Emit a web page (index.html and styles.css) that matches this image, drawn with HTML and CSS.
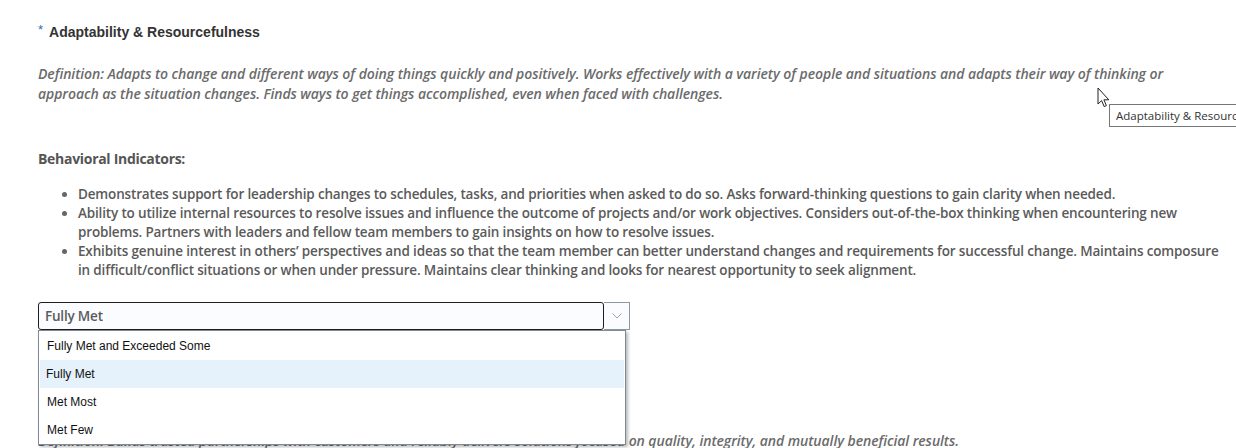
FILE: index.html
```html
<!DOCTYPE html>
<html lang="en">
<head>
<meta charset="utf-8">
<title>Adaptability & Resourcefulness</title>
<link rel="stylesheet" href="styles.css">
</head>
<body>
<main class="page">
  <section class="competency">
    <h2 class="title"><span class="req">*</span>Adaptability &amp; Resourcefulness</h2>
    <p class="definition">Definition: Adapts to change and different ways of doing things quickly and positively. Works effectively with a variety of people and situations and adapts their way of thinking or approach as the situation changes. Finds ways to get things accomplished, even when faced with challenges.</p>
    <h3 class="indicators-title">Behavioral Indicators:</h3>
    <ul class="indicators">
      <li>Demonstrates support for leadership changes to schedules, tasks, and priorities when asked to do so. Asks forward-thinking questions to gain clarity when needed.</li>
      <li>Ability to utilize internal resources to resolve issues and influence the outcome of projects and/or work objectives. Considers out-of-the-box thinking when encountering new problems. Partners with leaders and fellow team members to gain insights on how to resolve issues.</li>
      <li>Exhibits genuine interest in others’ perspectives and ideas so that the team member can better understand changes and requirements for successful change. Maintains composure in difficult/conflict situations or when under pressure. Maintains clear thinking and looks for nearest opportunity to seek alignment.</li>
    </ul>
    <div class="select-wrap">
      <div class="select">
        <div class="select-value">Fully Met</div>
        <div class="select-btn">
          <svg width="10" height="6" viewBox="0 0 10 6"><path d="M0.5 0.5 L5 5 L9.5 0.5" fill="none" stroke="#a0a6ad" stroke-width="1"/></svg>
        </div>
      </div>
      <ul class="options">
        <li class="option">Fully Met and Exceeded Some</li>
        <li class="option active">Fully Met</li>
        <li class="option">Met Most</li>
        <li class="option">Met Few</li>
      </ul>
    </div>
  </section>
  <section class="competency next">
    <h2 class="title"><span class="req">*</span>Customer Focus</h2>
    <p class="definition">Definition: Builds trusted partnerships with customers and reliably delivers solutions focused on quality, integrity, and mutually beneficial results.</p>
  </section>
</main>
<div class="tooltip">Adaptability &amp; Resourcefulness</div>
<svg class="cursor" width="14" height="22" viewBox="0 0 14 22"><path d="M1 1 L1 17 L4.6 13.6 L7.2 19.6 L9.4 18.6 L6.9 12.8 L11.8 12.8 Z" fill="#fff" stroke="#222" stroke-width="1" stroke-linejoin="miter"/></svg>
</body>
</html>
```

FILE: styles.css
```css
html, body {
  margin: 0;
  padding: 0;
  background: #fff;
  overflow: hidden;
}
body {
  width: 1236px;
  height: 448px;
  position: relative;
  font-family: "Open Sans", "Noto Sans", sans-serif;
}
.page {
  padding: 22px 10px 0 38px;
}
.title {
  margin: 0;
  font-family: "Liberation Sans", Arial, sans-serif;
  font-size: 14px;
  font-weight: bold;
  color: #333;
  line-height: 20px;
}
.req {
  color: #2a6ebb;
  font-weight: normal;
  font-size: 13px;
  margin-right: 6px;
  position: relative;
  top: -3px;
}
.definition {
  margin: 21px 16px 0 0;
  font-style: italic;
  font-weight: 600;
  font-size: 14px;
  letter-spacing: -0.07px;
  line-height: 20px;
  color: #6b6b6b;
}
.indicators-title {
  margin: 45px 0 0 0;
  font-size: 14px;
  font-weight: 700;
  letter-spacing: -0.3px;
  color: #555;
  line-height: 20px;
}
.indicators {
  margin: 16px 0 0 0;
  padding-left: 40px;
  font-size: 13.5px;
  font-weight: 600;
  letter-spacing: -0.16px;
  color: #5a5a5a;
  line-height: 19px;
}
.indicators li::marker {
  color: #666;
}
.select-wrap {
  position: relative;
  margin-top: 22px;
  width: 592px;
}
.select {
  display: flex;
  height: 28px;
}
.select-value {
  flex: 1;
  box-sizing: border-box;
  border: 1.5px solid #1e1e1e;
  border-radius: 3px;
  background: #fafcff;
  padding: 0 6px;
  font-size: 13.5px;
  font-weight: 600;
  letter-spacing: -0.2px;
  color: #5a5a5a;
  line-height: 27px;
}
.select-btn {
  width: 26px;
  box-sizing: border-box;
  border: 1px solid #8c98a4;
  border-left: none;
  background: #fafcff;
  display: flex;
  align-items: center;
  justify-content: center;
}
.options {
  position: absolute;
  top: 28px;
  left: 0;
  width: 588px;
  box-sizing: border-box;
  margin: 0;
  padding: 1px 1px 0 1px;
  list-style: none;
  background: #fff;
  border: 1px solid #7f8a95;
  box-shadow: 2px 2px 3px rgba(0,0,0,0.28);
  z-index: 2;
}
.option {
  height: 28px;
  line-height: 28px;
  padding-left: 7px;
  font-family: "Liberation Sans", Arial, sans-serif;
  font-size: 12px;
  color: #111;
}
.option.active {
  background: #e5f1fb;
  padding-left: 6px;
}
.next {
  margin-top: 55px;
}
.next .definition {
  margin-top: 25px;
}
.tooltip {
  position: absolute;
  left: 1109px;
  top: 104px;
  height: 23px;
  box-sizing: border-box;
  padding: 0 6px;
  border: 1px solid #767676;
  background: #fff;
  font-family: "Open Sans", "Noto Sans", sans-serif;
  font-size: 11.5px;
  line-height: 21px;
  color: #333;
  white-space: nowrap;
}
.cursor {
  position: absolute;
  left: 1097px;
  top: 87px;
}
```
